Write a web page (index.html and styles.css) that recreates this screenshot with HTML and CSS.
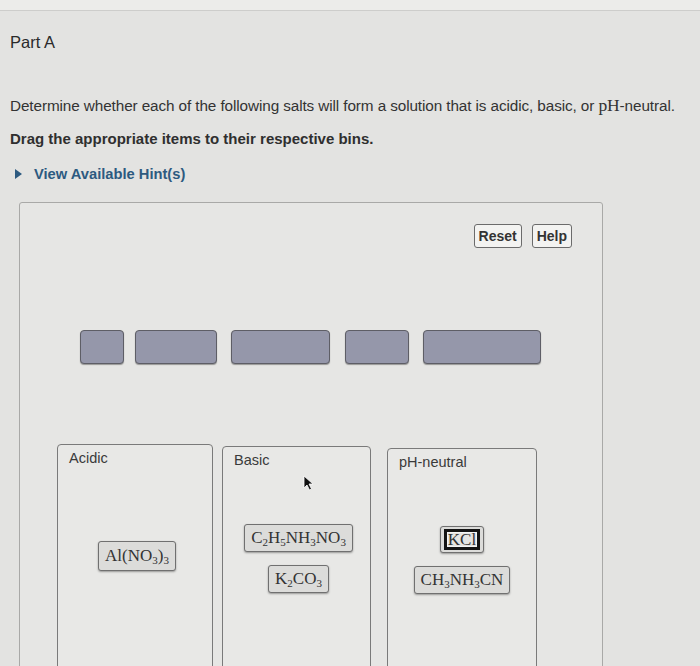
FILE: index.html
```html
<!DOCTYPE html>
<html>
<head>
<meta charset="utf-8">
<link rel="stylesheet" href="styles.css">
</head>
<body>
<div class="topband"></div>
<div class="content">
  <h2 class="part">Part A</h2>
  <p class="q">Determine whether each of the following salts will form a solution that is acidic, basic, or <span class="math">pH</span>-neutral.</p>
  <p class="drag">Drag the appropriate items to their respective bins.</p>
  <div class="hint"><span class="tri"></span>View Available Hint(s)</div>
  <div class="panel">
    <div class="tools">
      <span class="btn">Reset</span>
      <span class="btn">Help</span>
    </div>
    <div class="tiles">
      <span class="tile t1"></span>
      <span class="tile t2"></span>
      <span class="tile t3"></span>
      <span class="tile t4"></span>
      <span class="tile t5"></span>
    </div>
    <div class="bins">
      <div class="bin b1">
        <div class="label">Acidic</div>
        <div class="body">
          <span class="chip">Al(NO<sub>3</sub>)<sub>3</sub></span>
        </div>
      </div>
      <div class="bin b2">
        <div class="label">Basic</div>
        <div class="body">
          <span class="chip">C<sub>2</sub>H<sub>5</sub>NH<sub>3</sub>NO<sub>3</sub></span>
          <span class="chip">K<sub>2</sub>CO<sub>3</sub></span>
        </div>
      </div>
      <div class="bin b3">
        <div class="label">pH-neutral</div>
        <div class="body">
          <span class="chip focus"><span class="ring">KCl</span></span>
          <span class="chip">CH<sub>3</sub>NH<sub>3</sub>CN</span>
        </div>
      </div>
    </div>
  </div>
</div>
<svg class="cursor" width="12" height="16" viewBox="0 0 12 16"><path d="M1 1 L1 13 L4 10 L6.5 15 L8.5 14 L6 9 L10 9 Z" fill="#111" stroke="#fff" stroke-width="0.8"/></svg>
</body>
</html>
```
FILE: styles.css
```css
html, body { margin: 0; padding: 0; }
body {
  background: #e3e3e1;
  font-family: "Liberation Sans", Arial, sans-serif;
  color: #2b2b2b;
  width: 700px;
  height: 666px;
  overflow: hidden;
  position: relative;
}
.topband {
  height: 10px;
  background: #ececea;
  border-bottom: 1px solid #cdcdcb;
}
.content { padding-left: 10px; }
.part {
  margin: 0;
  padding-top: 22px;
  font-size: 16.5px;
  font-weight: normal;
  line-height: 18px;
  color: #2a2a2a;
}
.q {
  margin: 44px 0 0 0;
  font-size: 15.3px;
  line-height: 20px;
  color: #333;
  letter-spacing: -0.1px;
  white-space: nowrap;
}
.math {
  font-family: "Liberation Serif", "Times New Roman", serif;
  font-size: 17.5px;
}
.drag {
  margin: 13px 0 0 0;
  font-size: 15px;
  font-weight: bold;
  line-height: 20px;
  color: #2f2f2f;
}
.hint {
  margin-top: 15px;
  font-size: 14.7px;
  font-weight: bold;
  line-height: 20px;
  color: #2d5a80;
  display: flex;
  align-items: center;
}
.tri {
  width: 0; height: 0;
  border-left: 7px solid #2d5a80;
  border-top: 5px solid transparent;
  border-bottom: 5px solid transparent;
  margin: 0 12px 0 5px;
}
.panel {
  margin-top: 18px;
  margin-left: 9px;
  width: 582px;
  height: 480px;
  border: 1px solid #a9a9a7;
  border-radius: 3px;
  background: #e6e6e4;
}
.tools {
  display: flex;
  justify-content: flex-end;
  gap: 10px;
  padding: 21px 30px 0 0;
}
.btn {
  box-sizing: border-box;
  font-size: 14px;
  font-weight: bold;
  color: #333;
  border: 1px solid #6b6b6b;
  border-radius: 3px;
  background: #f3f3f1;
  height: 24px;
  line-height: 22px;
  padding: 0 4px;
}
.tiles {
  display: flex;
  margin-top: 82px;
  padding-left: 60px;
  align-items: flex-start;
}
.tile {
  box-sizing: border-box;
  height: 34px;
  background: #9597aa;
  border: 1.5px solid #5e5e66;
  border-radius: 4px;
  box-shadow: 0 1px 1px rgba(0,0,0,0.35);
}
.t1 { width: 44px; }
.t2 { width: 82px; margin-left: 11px; }
.t3 { width: 99px; margin-left: 14px; }
.t4 { width: 64px; margin-left: 15px; }
.t5 { width: 118px; margin-left: 14px; }
.bins {
  display: flex;
  margin-top: 80px;
  padding-left: 37px;
  align-items: flex-start;
}
.bin {
  box-sizing: border-box;
  height: 240px;
  border: 1.5px solid #7a7a7a;
  border-radius: 4px;
  background: #e8e8e6;
}
.b1 { width: 156px; }
.b2 { margin-top: 2px; margin-left: 9px; width: 149px; }
.b3 { margin-top: 4px; margin-left: 16px; width: 150px; }
.label {
  height: 28px;
  line-height: 26px;
  padding-left: 11px;
  font-size: 14.5px;
  color: #3a3a3a;
}
.body {
  height: 166px;
  display: flex;
  flex-direction: column;
  align-items: center;
  justify-content: center;
  gap: 13px;
}
.chip {
  display: block;
  box-sizing: border-box;
  font-family: "Liberation Serif", "Times New Roman", serif;
  font-size: 17px;
  color: #333;
  background: #dcdcda;
  border: 1.5px solid #707070;
  border-radius: 3px;
  box-shadow: 0 1px 2px rgba(0,0,0,0.35);
  height: 28px;
  line-height: 25px;
  padding: 0 6px;
  white-space: nowrap;
}
.chip sub { font-size: 11px; vertical-align: -3px; line-height: 0; }
.b1 .chip { margin-left: 4px; height: 30px; line-height: 27px; }
.b2 .chip { margin-left: 4px; }
.chip.focus { padding: 0 3px; display: flex; align-items: center; height: 27px; }
.ring {
  border: 3px solid #141414;
  box-shadow: inset 0 0 0 1px #f4f4f4;
  line-height: 15px;
  padding: 0 1px;
  background: #e4e4e2;
}
.cursor {
  position: absolute;
  left: 303px;
  top: 475px;
}
```
